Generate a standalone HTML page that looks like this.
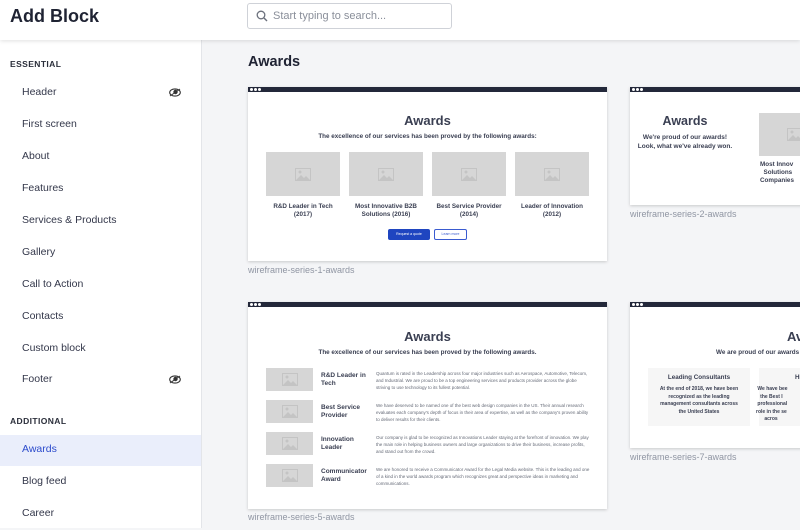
<!DOCTYPE html><html><head><style>
*{margin:0;padding:0;box-sizing:border-box}
body{width:800px;height:528px;overflow:hidden;font-family:"Liberation Sans",sans-serif;background:#f4f5f7;position:relative;color:#1f2333}
.hdr{position:absolute;left:0;top:0;width:800px;height:40px;background:#fff;box-shadow:0 1px 4px rgba(0,0,0,.12);z-index:2}
.hdr h1{position:absolute;left:10px;top:6px;font-size:18px;font-weight:bold;color:#1f2333}
.srch{position:absolute;left:247px;top:3px;width:205px;height:26px;border:1px solid #cfd2d8;border-radius:3px;font-size:11px;color:#8a8f9a;padding:6px 0 0 25px}
.side{position:absolute;left:0;top:40px;width:202px;height:488px;background:#fff;border-right:1px solid #e3e5e9}
.sec{position:absolute;left:10px;font-size:8.5px;font-weight:bold;letter-spacing:.4px;color:#2a2e3a}
.it{position:absolute;left:0;width:201px;height:31px;padding:8px 0 0 22px;font-size:10.5px;color:#33374a}
.it.act{background:#eaeefb;color:#2c4bcc}
.eye{position:absolute;right:20px;top:10px;width:12px;height:9px}
h2{position:absolute;left:248px;top:54px;font-size:14.5px;font-weight:bold;color:#1f2333}
.card{position:absolute;background:#fff;box-shadow:0 1px 3px rgba(0,0,0,.18);overflow:hidden}
.bar{position:absolute;left:0;top:0;width:100%;height:5px;background:#23283a}
.bar i{position:absolute;top:1px;width:3px;height:3px;background:#fff;border-radius:50%}
.lbl{position:absolute;font-size:9px;color:#9096a3}
.t{position:absolute;font-weight:bold;color:#3a3f52;text-align:center}
.img{position:absolute;background:#d6d6d6}
.img svg{position:absolute;left:50%;top:50%;width:16px;height:13px;margin:-6.5px 0 0 -8px}
.p{position:absolute;font-size:4.5px;line-height:7px;color:#666b78}
</style></head><body>
<svg width="0" height="0" style="position:absolute"><symbol id="ic" viewBox="0 0 16 13"><rect x=".5" y=".5" width="15" height="12" fill="none" stroke="#c4c4c4"/><circle cx="5" cy="4" r="1.5" fill="#c4c4c4"/><path d="M1 12l5-5 3 3 2-2 4 4z" fill="#c4c4c4"/></symbol></svg>
<div class="hdr"><h1>Add Block</h1>
<div class="srch"><svg style="position:absolute;left:8px;top:6px" width="12" height="12" viewBox="0 0 12 12"><circle cx="5" cy="5" r="3.8" fill="none" stroke="#6b707c" stroke-width="1.3"/><path d="M8 8l3 3" stroke="#6b707c" stroke-width="1.4"/></svg>Start typing to search...</div></div>
<div class="side">
<div class="sec" style="top:19px">ESSENTIAL</div>
<div class="it" style="top:38px">Header<svg class="eye" viewBox="0 0 12 9"><ellipse cx="6" cy="4.5" rx="5.3" ry="3.6" fill="none" stroke="#333" stroke-width="1.1"/><circle cx="6.5" cy="4" r="2.2" fill="#333"/><path d="M1 8L11 1" stroke="#333"/></svg></div>
<div class="it" style="top:70px">First screen</div>
<div class="it" style="top:102px">About</div>
<div class="it" style="top:134px">Features</div>
<div class="it" style="top:166px">Services &amp; Products</div>
<div class="it" style="top:198px">Gallery</div>
<div class="it" style="top:230px">Call to Action</div>
<div class="it" style="top:262px">Contacts</div>
<div class="it" style="top:294px">Custom block</div>
<div class="it" style="top:325px">Footer<svg class="eye" viewBox="0 0 12 9"><ellipse cx="6" cy="4.5" rx="5.3" ry="3.6" fill="none" stroke="#333" stroke-width="1.1"/><circle cx="6.5" cy="4" r="2.2" fill="#333"/><path d="M1 8L11 1" stroke="#333"/></svg></div>
<div class="sec" style="top:376px">ADDITIONAL</div>
<div class="it act" style="top:395px">Awards</div>
<div class="it" style="top:427px">Blog feed</div>
<div class="it" style="top:459px">Career</div>
</div>
<h2>Awards</h2>

<div class="card" style="left:248px;top:87px;width:359px;height:174px"><div class="bar"><i style="left:2px"></i><i style="left:6px"></i><i style="left:10px"></i></div>
<div class="t" style="left:0;width:359px;top:26px;font-size:13px">Awards</div>
<div class="t" style="left:0;width:359px;top:46px;font-size:6.3px">The excellence of our services has been proved by the following awards:</div>
<div class="img" style="left:18px;top:65px;width:74px;height:44px"><svg><use href="#ic"/></svg></div>
<div class="img" style="left:101px;top:65px;width:74px;height:44px"><svg><use href="#ic"/></svg></div>
<div class="img" style="left:184px;top:65px;width:74px;height:44px"><svg><use href="#ic"/></svg></div>
<div class="img" style="left:267px;top:65px;width:74px;height:44px"><svg><use href="#ic"/></svg></div>
<div class="t" style="left:18px;width:74px;top:116px;font-size:6.3px;line-height:7.5px">R&amp;D Leader in Tech<br>(2017)</div>
<div class="t" style="left:101px;width:74px;top:116px;font-size:6.3px;line-height:7.5px">Most Innovative B2B<br>Solutions (2016)</div>
<div class="t" style="left:184px;width:74px;top:116px;font-size:6.3px;line-height:7.5px">Best Service Provider<br>(2014)</div>
<div class="t" style="left:267px;width:74px;top:116px;font-size:6.3px;line-height:7.5px">Leader of Innovation<br>(2012)</div>
<div style="position:absolute;left:140px;top:142px;width:42px;height:11px;background:#1f45c0;border-radius:2px;font-size:3.5px;color:#fff;text-align:center;line-height:11px">Request a quote</div>
<div style="position:absolute;left:186px;top:142px;width:33px;height:11px;border:1px solid #3a5bd0;border-radius:2px;font-size:3.5px;color:#3a5bd0;text-align:center;line-height:9px">Learn more</div>
</div>
<div class="lbl" style="left:248px;top:265px">wireframe-series-1-awards</div>

<div class="card" style="left:630px;top:87px;width:180px;height:118px"><div class="bar"><i style="left:2px"></i><i style="left:6px"></i><i style="left:10px"></i></div>
<div class="t" style="left:15px;width:80px;top:27px;font-size:12.5px">Awards</div>
<div class="t" style="left:0;width:110px;top:46px;font-size:6.5px;line-height:9px">We're proud of our awards!<br>Look, what we've already won.</div>
<div class="img" style="left:129px;top:26px;width:60px;height:43px"><svg style="margin-left:-2px"><use href="#ic"/></svg></div>
<div class="t" style="left:130px;top:74px;font-size:6.3px;line-height:8px;text-align:left;white-space:nowrap">Most Innov<br>&nbsp;&nbsp;Solutions<br>Companies</div>
</div>
<div class="lbl" style="left:630px;top:209px">wireframe-series-2-awards</div>

<div class="card" style="left:248px;top:302px;width:359px;height:207px"><div class="bar"><i style="left:2px"></i><i style="left:6px"></i><i style="left:10px"></i></div>
<div class="t" style="left:0;width:359px;top:27px;font-size:13px">Awards</div>
<div class="t" style="left:0;width:359px;top:47px;font-size:6.3px">The excellence of our services has been proved by the following awards.</div>
<div class="img" style="left:18px;top:66px;width:47px;height:23px"><svg><use href="#ic"/></svg></div>
<div class="img" style="left:18px;top:98px;width:47px;height:23px"><svg><use href="#ic"/></svg></div>
<div class="img" style="left:18px;top:130px;width:47px;height:23px"><svg><use href="#ic"/></svg></div>
<div class="img" style="left:18px;top:162px;width:47px;height:23px"><svg><use href="#ic"/></svg></div>
<div class="t" style="left:73px;top:70px;font-size:6.5px;line-height:8px;text-align:left">R&amp;D Leader in<br>Tech</div>
<div class="t" style="left:73px;top:102px;font-size:6.5px;line-height:8px;text-align:left">Best Service<br>Provider</div>
<div class="t" style="left:73px;top:134px;font-size:6.5px;line-height:8px;text-align:left">Innovation<br>Leader</div>
<div class="t" style="left:73px;top:166px;font-size:6.5px;line-height:8px;text-align:left">Communicator<br>Award</div>
<div class="p" style="left:128px;top:68px;width:214px">Quantum is rated in the Leadership across four major industries such as Aerospace, Automotive, Telecom, and Industrial. We are proud to be a top engineering services and products provider across the globe striving to use technology to its fullest potential.</div>
<div class="p" style="left:128px;top:100px;width:214px">We have deserved to be named one of the best web design companies in the US. Their annual research evaluates each company's depth of focus in their area of expertise, as well as the company's proven ability to deliver results for their clients.</div>
<div class="p" style="left:128px;top:132px;width:214px">Our company is glad to be recognized as Innovations Leader staying at the forefront of innovation. We play the main role in helping business owners and large organizations to drive their business, increase profits, and stand out from the crowd.</div>
<div class="p" style="left:128px;top:164px;width:214px">We are honored to receive a Communicator Award for the Legal Media website. This is the leading and one of a kind in the world awards program which recognizes great and perspective ideas in marketing and communications.</div>
</div>
<div class="lbl" style="left:248px;top:512px">wireframe-series-5-awards</div>

<div class="card" style="left:630px;top:302px;width:180px;height:146px"><div class="bar"><i style="left:2px"></i><i style="left:6px"></i><i style="left:10px"></i></div>
<div class="t" style="left:157px;top:27px;font-size:13px">Av</div>
<div class="t" style="left:86px;top:47px;font-size:6.3px;white-space:nowrap">We are proud of our awards</div>
<div style="position:absolute;left:18px;top:66px;width:102px;height:58px;background:#f6f6f6"></div>
<div style="position:absolute;left:129px;top:66px;width:60px;height:58px;background:#f6f6f6"></div>
<div class="t" style="left:18px;width:102px;top:72px;font-size:6.3px">Leading Consultants</div>
<div class="t" style="left:18px;width:102px;top:84px;font-size:5px;line-height:7.5px">At the end of 2018, we have been<br>recognized as the leading<br>management consultants across<br>the United States</div>
<div class="t" style="left:165px;top:72px;font-size:6.3px">Hi</div>
<div class="t" style="left:126px;top:84px;font-size:5px;line-height:7.5px;text-align:left;white-space:nowrap">&nbsp;We have bee<br>&nbsp;&nbsp;&nbsp;the Best I<br>&nbsp;professional<br>role in the se<br>&nbsp;&nbsp;&nbsp;&nbsp;&nbsp;&nbsp;acros</div>
</div>
<div class="lbl" style="left:630px;top:452px">wireframe-series-7-awards</div>
</body></html>
